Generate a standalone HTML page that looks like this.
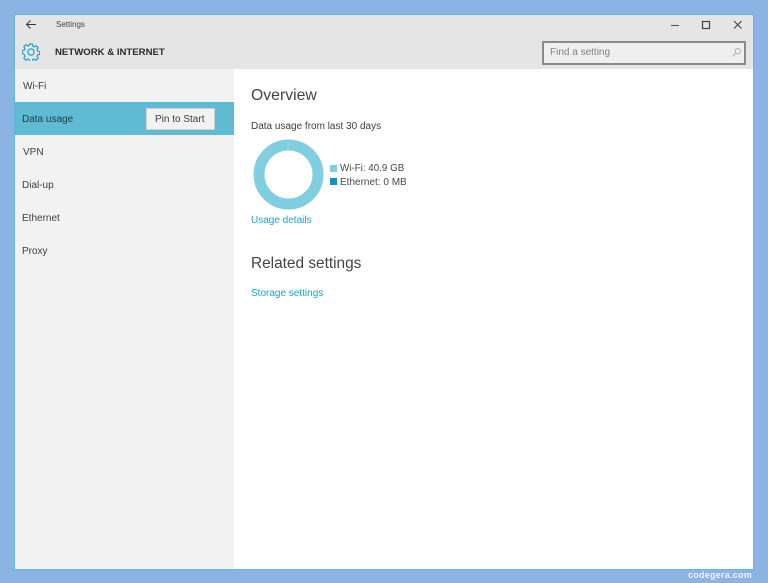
<!DOCTYPE html>
<html><head><meta charset="utf-8">
<style>
html,body{margin:0;padding:0;width:768px;height:583px;overflow:hidden;background:#8bb3e3;font-family:"Liberation Sans",sans-serif;}
.a{position:absolute;white-space:nowrap;line-height:1;}
body{position:relative;color:#333;}
.t{font-size:10px;color:#3d3d3d;}
</style></head><body>
<div class="a" style="left:14px;top:14px;width:740px;height:556px;background:#5fb9d8;"></div>
<div class="a" style="left:15px;top:15px;width:738px;height:554px;background:#fff;"></div>
<div class="a" style="left:15px;top:15px;width:738px;height:54px;background:#e5e5e5;"></div>
<div class="a" style="left:15px;top:69px;width:219px;height:500px;background:#f2f2f2;"></div>
<div class="a" style="left:15px;top:102px;width:219px;height:33px;background:#5fbbd4;"></div>

<svg class="a" style="left:25px;top:19px" width="12" height="12" viewBox="0 0 12 12"><path d="M11 5.500H1.500M5.500 1.500L1.500 5.500l4 4" fill="none" stroke="#333" stroke-width="1"/></svg>
<div class="a" style="left:56px;top:21px;font-size:8px;color:#444;">Settings</div>

<svg class="a" style="left:22px;top:43px" width="18" height="18" viewBox="0 0 18 18"><g fill="none" stroke="#1fa3c9" stroke-width="1.200"><circle cx="9" cy="9" r="3.100"/><path d="M7.600 1h2.800l.4 2.200 1.500.7 1.900-1.200 2 2-1.200 1.900.6 1.500 2.100.5v2.800l-2.100.4-.6 1.500 1.200 1.900-2 2-1.900-1.200-1.500.6-.4 2.100H7.600l-.4-2.100-1.500-.6-1.900 1.200-2-2 1.200-1.900-.6-1.500L.3 10.400V7.600l2.100-.5.6-1.500L1.800 3.700l2-2 1.900 1.200 1.500-.7z"/></g></svg>
<div class="a" style="left:55px;top:48px;font-size:9.600px;font-weight:bold;color:#2a2a2a;">NETWORK &amp; INTERNET</div>

<svg class="a" style="left:670px;top:19px" width="76" height="12" viewBox="0 0 76 12"><path d="M1 6.500H9" stroke="#555" stroke-width="1.100"/><rect x="32.500" y="2.500" width="7" height="7" fill="none" stroke="#444" stroke-width="1.200"/><path d="M64 2l7.500 7.500M71.500 2L64 9.500" stroke="#444" stroke-width="1.100"/></svg>

<div class="a" style="left:542px;top:41px;width:200px;height:20px;border:2px solid #8a8a8a;background:#efefef;"></div>
<div class="a" style="left:550px;top:48px;font-size:10px;color:#808080;">Find a setting</div>
<svg class="a" style="left:731px;top:47px" width="11" height="11" viewBox="0 0 11 11"><circle cx="6.800" cy="4.200" r="2.700" fill="none" stroke="#b0b0b0"/><path d="M4.900 6.100L1.500 9.500" stroke="#b0b0b0"/></svg>

<div class="a t" style="left:23px;top:82px;">Wi-Fi</div>
<div class="a t" style="left:22px;top:115px;color:#1c3a45;">Data usage</div>
<div class="a" style="left:146px;top:108px;width:67px;height:20px;border:1px solid #d0d0d0;background:#f2f2f2;"></div>
<div class="a t" style="left:155px;top:115px;">Pin to Start</div>
<div class="a t" style="left:23px;top:148px;">VPN</div>
<div class="a t" style="left:22px;top:181px;">Dial-up</div>
<div class="a t" style="left:22px;top:214px;">Ethernet</div>
<div class="a t" style="left:22px;top:247px;">Proxy</div>

<div class="a" style="left:251px;top:88px;font-size:15.800px;color:#444;">Overview</div>
<div class="a t" style="left:251px;top:122px;">Data usage from last 30 days</div>
<svg class="a" style="left:253px;top:139px" width="72" height="72" viewBox="0 0 72 72"><circle cx="35.500" cy="35.500" r="29.500" fill="none" stroke="#7fcfe0" stroke-width="11"/><path d="M35 1v10" stroke="#93d6e5" stroke-width="1"/></svg>
<div class="a" style="left:330px;top:165px;width:7px;height:7px;background:#7fcfe0;"></div>
<div class="a" style="left:340px;top:164px;font-size:9.800px;color:#4a4a4a;">Wi-Fi: 40.9 GB</div>
<div class="a" style="left:330px;top:178px;width:7px;height:7px;background:#0f93b8;"></div>
<div class="a" style="left:340px;top:178px;font-size:10px;color:#4a4a4a;">Ethernet: 0 MB</div>
<div class="a" style="left:251px;top:216px;font-size:10px;color:#1aa3c8;">Usage details</div>
<div class="a" style="left:251px;top:256px;font-size:15.400px;color:#444;">Related settings</div>
<div class="a" style="left:251px;top:289px;font-size:10px;color:#1aa3c8;">Storage settings</div>
<div class="a" style="left:688px;top:571px;font-size:9px;font-weight:bold;color:#eef4fb;letter-spacing:.25px;">codegera.com</div>
</body></html>
